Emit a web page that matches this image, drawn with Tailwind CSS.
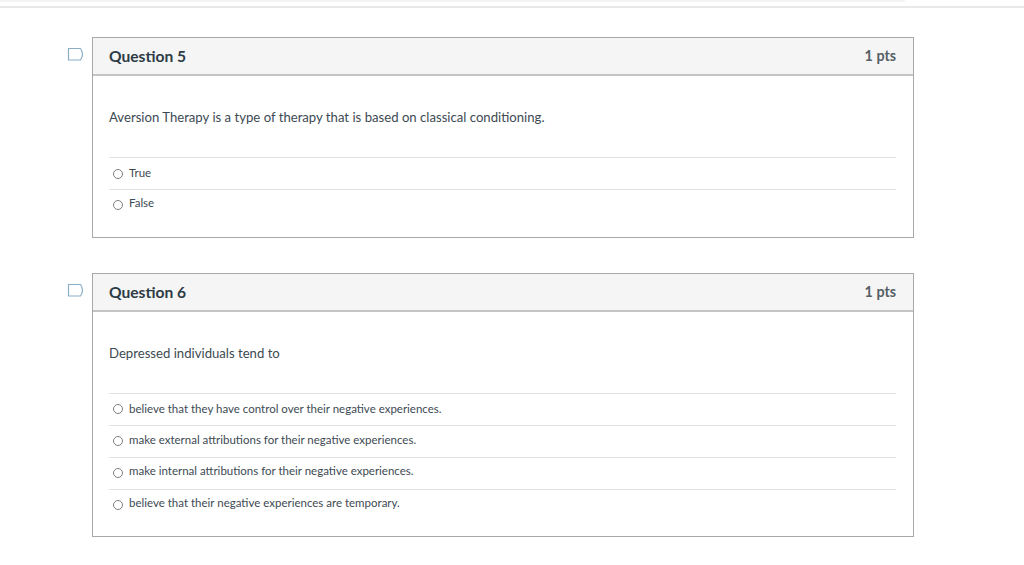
<!DOCTYPE html>
<html lang="en">
  <head>
    <meta charset="UTF-8" />
    <meta name="viewport" content="width=device-width, initial-scale=1.0" />
    <title>Quiz</title>
    <script src="https://cdn.jsdelivr.net/npm/@tailwindcss/browser@4"></script>
  </head>
  <body class="bg-white text-[#3d4a53] font-['Lato',sans-serif] overflow-hidden">
    <!-- Top edge -->
    <div class="h-[2px] w-[905px] bg-[#f3f3f3] rounded-br"></div>
    <div class="h-[2px] mt-[4px] bg-[#e8e8e8]"></div>

    <div class="pt-[29px] pl-[67px] flex flex-col gap-[35px]">
      <!-- Question 5 -->
      <div class="flex">
        <div class="w-[25px] pt-[10px] shrink-0">
          <svg width="18" height="15" viewBox="0 0 18 15" fill="none" stroke="#8aaec8" stroke-width="1.2">
            <path d="M1.5 1.5H13.5Q17.5 7.25 13.5 13H1.5Z" stroke-linejoin="round" />
          </svg>
        </div>
        <div class="w-[822px] h-[201px] border border-[#a8a8a8]">
          <div class="h-[38px] pl-[16px] pr-[17px] flex items-center justify-between bg-[#f5f5f5] border-b-2 border-[#c4c4c4]">
            <h2 class="text-[15.6px] font-bold text-[#2d3b45] mt-[2px]">Question 5</h2>
            <span class="text-[14.3px] font-bold text-[#555f66]">1 pts</span>
          </div>
          <div class="pl-[16px] pr-[17px]">
            <p class="text-[13.15px] leading-[20px] mt-[31px] mb-[30px]">Aversion Therapy is a type of therapy that is based on classical conditioning.</p>
            <div class="border-t border-[#e2e2e2] h-[32px] flex items-center gap-[6px] pl-[4px] text-[11.5px]">
              <span class="w-[10px] h-[10px] rounded-full border border-[#808080]"></span>
              <span class="-mt-[1px]">True</span>
            </div>
            <div class="border-t border-[#e2e2e2] h-[30px] flex items-center gap-[6px] pl-[4px] text-[11.5px]">
              <span class="w-[10px] h-[10px] rounded-full border border-[#808080]"></span>
              <span class="-mt-[3px]">False</span>
            </div>
          </div>
        </div>
      </div>

      <!-- Question 6 -->
      <div class="flex">
        <div class="w-[25px] pt-[10px] shrink-0">
          <svg width="18" height="15" viewBox="0 0 18 15" fill="none" stroke="#8aaec8" stroke-width="1.2">
            <path d="M1.5 1.5H13.5Q17.5 7.25 13.5 13H1.5Z" stroke-linejoin="round" />
          </svg>
        </div>
        <div class="w-[822px] h-[264px] border border-[#a8a8a8]">
          <div class="h-[38px] pl-[16px] pr-[17px] flex items-center justify-between bg-[#f5f5f5] border-b-2 border-[#c4c4c4]">
            <h2 class="text-[15.6px] font-bold text-[#2d3b45] mt-[2px]">Question 6</h2>
            <span class="text-[14.3px] font-bold text-[#555f66]">1 pts</span>
          </div>
          <div class="pl-[16px] pr-[17px]">
            <p class="text-[13.15px] leading-[20px] mt-[31px] mb-[30px]">Depressed individuals tend to</p>
            <div class="border-t border-[#e2e2e2] h-[32px] flex items-center gap-[6px] pl-[4px] text-[11.5px]">
              <span class="w-[10px] h-[10px] -mt-[2px] rounded-full border border-[#808080]"></span>
              <span class="-mt-[2px]">believe that they have control over their negative experiences.</span>
            </div>
            <div class="border-t border-[#e2e2e2] h-[32px] flex items-center gap-[6px] pl-[4px] text-[11.5px]">
              <span class="w-[10px] h-[10px] -mt-[2px] rounded-full border border-[#808080]"></span>
              <span class="-mt-[4px]">make external attributions for their negative experiences.</span>
            </div>
            <div class="border-t border-[#e2e2e2] h-[32px] flex items-center gap-[6px] pl-[4px] text-[11.5px]">
              <span class="w-[10px] h-[10px] -mt-[2px] rounded-full border border-[#808080]"></span>
              <span class="-mt-[6px]">make internal attributions for their negative experiences.</span>
            </div>
            <div class="border-t border-[#e2e2e2] h-[32px] flex items-center gap-[6px] pl-[4px] text-[11.5px]">
              <span class="w-[10px] h-[10px] -mt-[2px] rounded-full border border-[#808080]"></span>
              <span class="-mt-[6px]">believe that their negative experiences are temporary.</span>
            </div>
          </div>
        </div>
      </div>
    </div>
  </body>
</html>
